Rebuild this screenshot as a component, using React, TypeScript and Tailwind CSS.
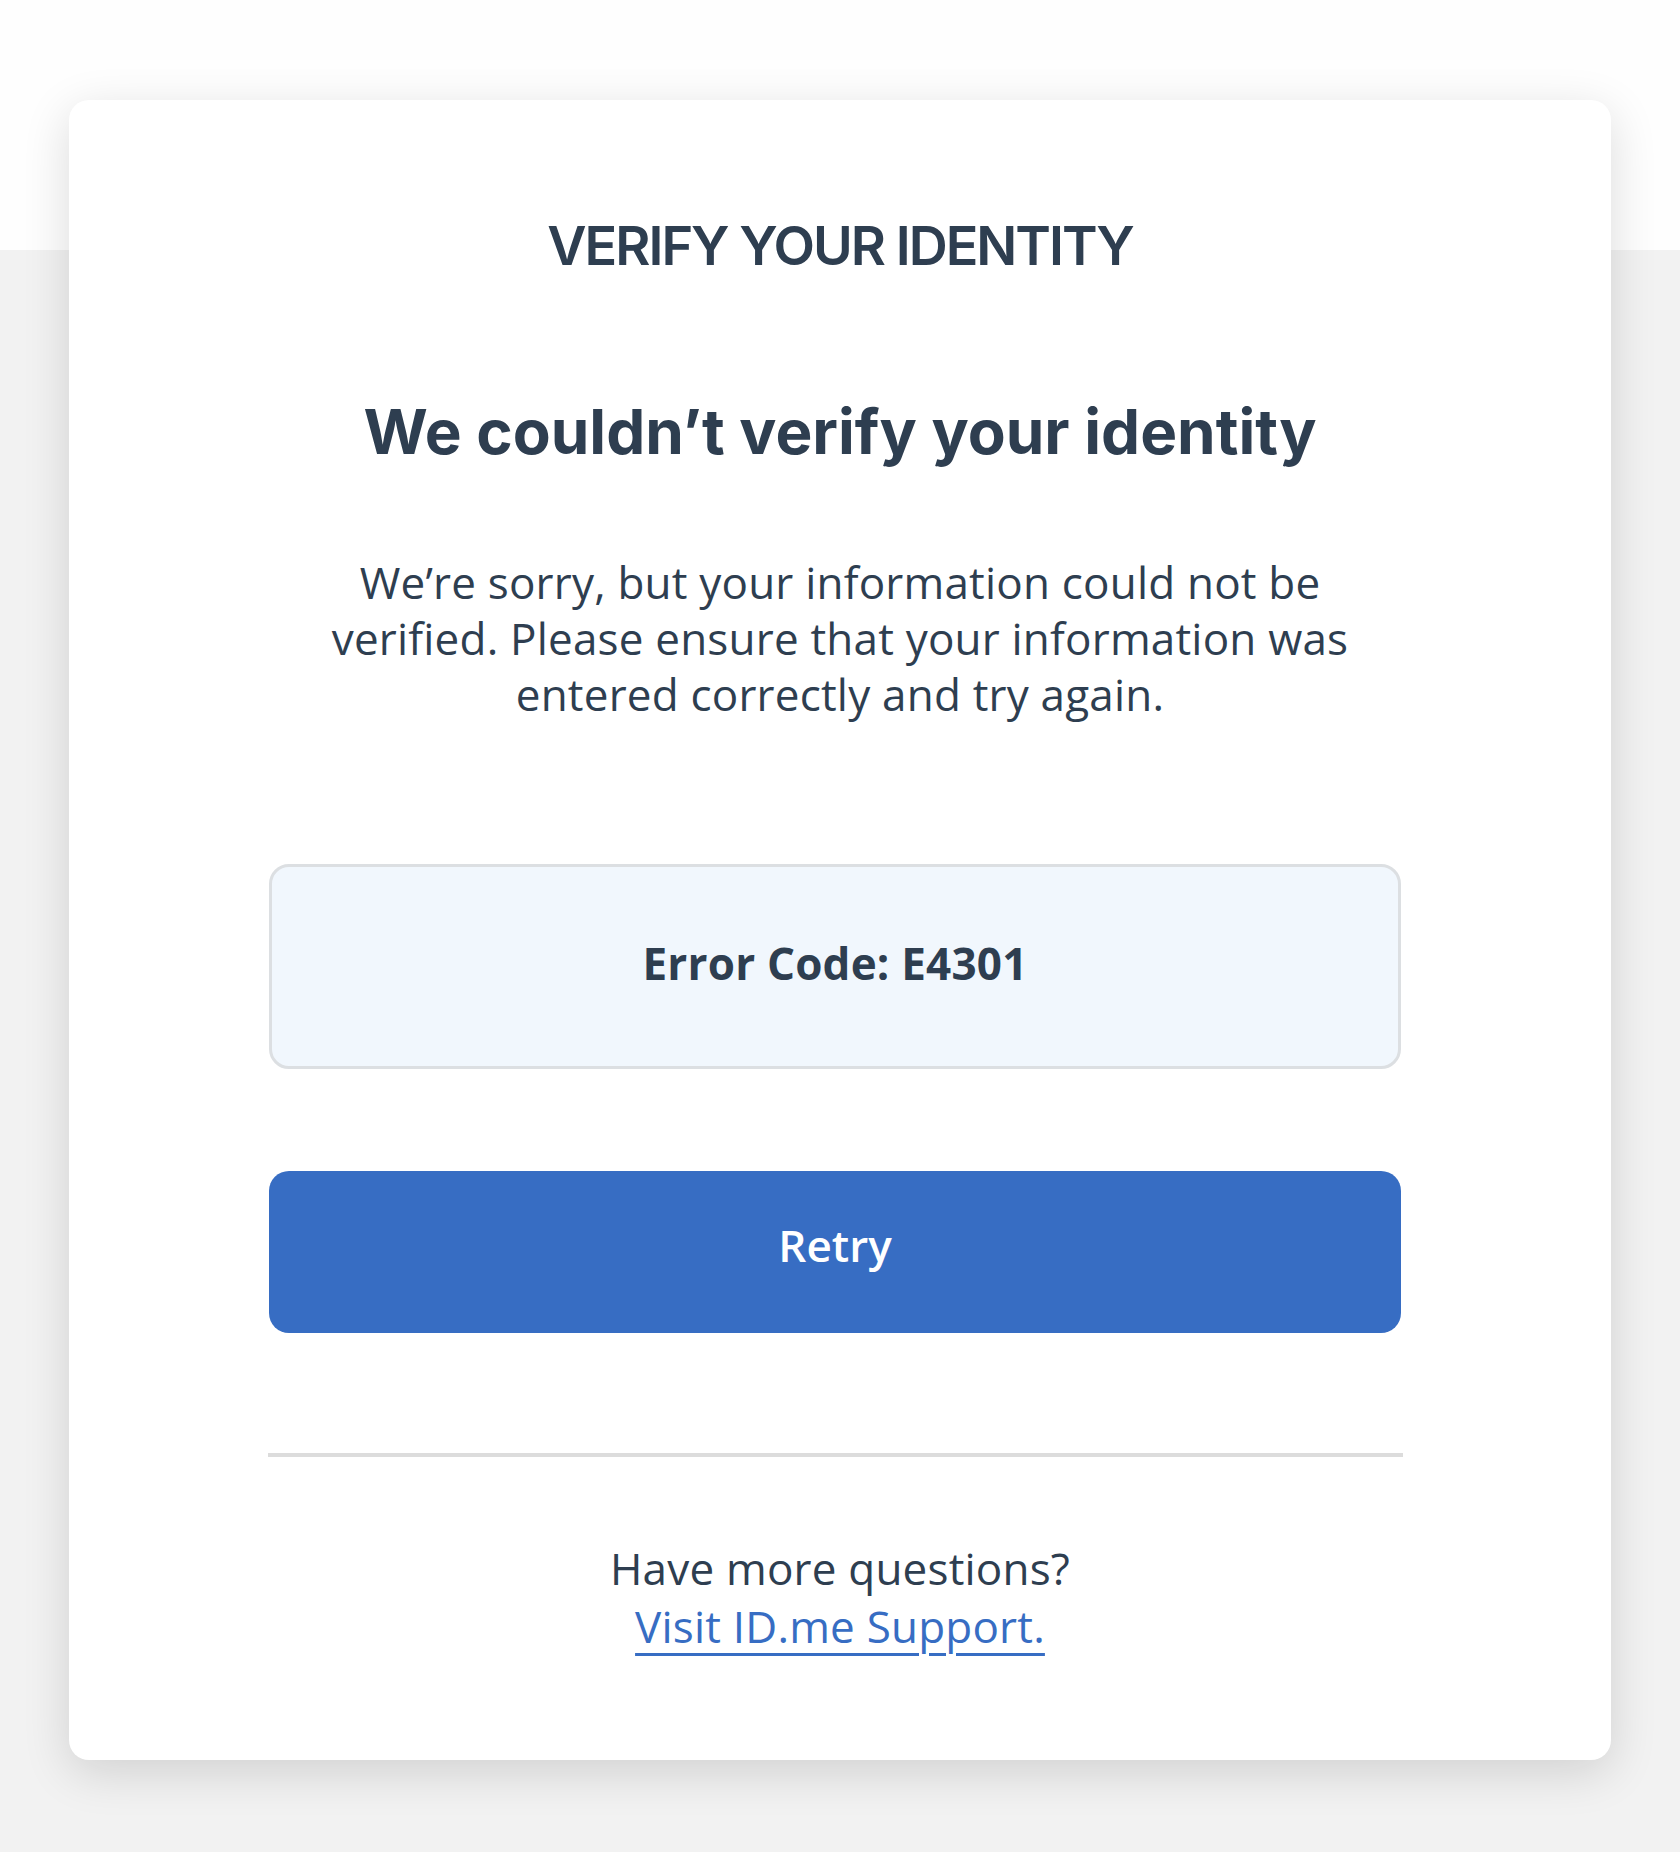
import React from 'react';

export default function App() {
  return (
    <div className="min-h-[1852px] w-full bg-[linear-gradient(to_bottom,#fefefe_250px,#f2f2f2_250px)] pt-[100px] px-[69px] pb-[94px]">
      <div className="mx-auto w-[1542px] rounded-[20px] bg-white px-[205px] pt-[119px] pb-[105px] shadow-[0_12px_48px_rgba(0,0,0,0.14)] text-[#2e3e50]">
        {/* Header */}
        <h1 className="font-['Inter','Noto_Sans',sans-serif] text-center text-[54px] leading-none font-semibold uppercase tracking-[-2px]">
          Verify your identity
        </h1>

        <h2 className="mt-[128px] font-['Inter','Noto_Sans',sans-serif] text-center text-[62px] leading-none font-bold">
          We couldn’t verify your identity
        </h2>

        <p className="mx-auto mt-[91px] max-w-[1050px] font-['Open_Sans','Noto_Sans',sans-serif] text-center text-[44px] leading-[56px] tracking-[0.2px]">
          We’re sorry, but your information could not be verified. Please ensure that your
          information was entered correctly and try again.
        </p>

        {/* Error code */}
        <div className="mt-[142px] -ml-[5px] mr-[5px] flex h-[205px] items-center justify-center rounded-[20px] border-[3px] border-[#dcdfe2] bg-[#f1f7fd] pb-[7px]">
          <span className="font-['Open_Sans','Noto_Sans',sans-serif] text-[44px] font-bold leading-none tracking-[0.2px]">
            Error Code: E4301
          </span>
        </div>

        <div className="-ml-[5px] mr-[5px]">
          <button className="mt-[102px] flex h-[162px] w-full items-center justify-center rounded-[20px] bg-[#376dc3] pb-[14px] font-['Open_Sans','Noto_Sans',sans-serif] text-[44px] font-semibold text-white">
            Retry
          </button>
        </div>

        <div className="mt-[120px] -ml-[6px] mr-[3px] h-[4px] bg-[#dcdcdc]" />

        <div className="mt-[82px] font-['Open_Sans','Noto_Sans',sans-serif] text-center text-[44px] leading-[58px] tracking-[0.2px]">
          <p>Have more questions?</p>
          <a href="#" className="text-[#376dc3] underline decoration-[3px] underline-offset-[10px]">
            Visit ID.me Support.
          </a>
        </div>
      </div>
    </div>
  );
}
